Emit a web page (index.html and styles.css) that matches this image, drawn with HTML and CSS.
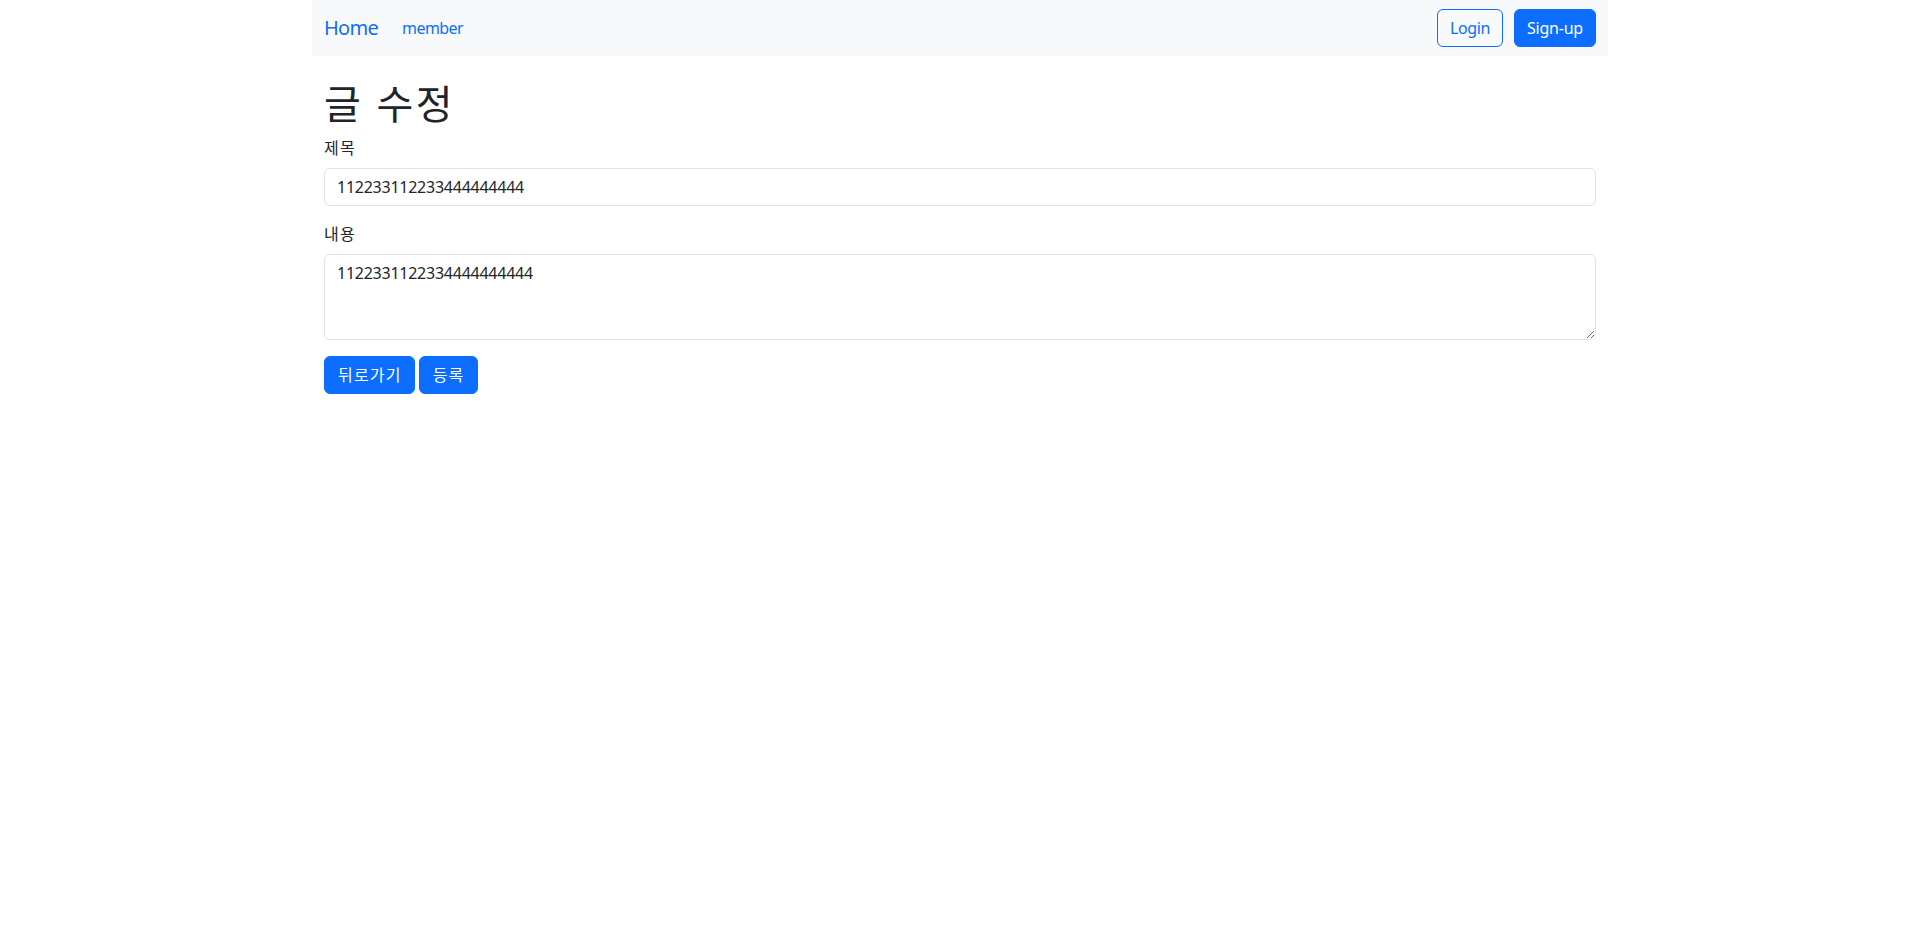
FILE: index.html
```html
<!DOCTYPE html>
<html lang="ko">
<head>
<meta charset="utf-8">
<title>글 수정</title>
<link rel="stylesheet" href="styles.css">
</head>
<body>
<div class="container">
  <nav class="navbar">
    <div class="nav-inner">
      <div class="nav-left">
        <a class="brand" href="#">Home</a>
        <ul class="nav-list">
          <li><a class="nav-link" href="#">member</a></li>
        </ul>
      </div>
      <div class="nav-right">
        <button class="btn btn-outline" type="button">Login</button>
        <button class="btn btn-primary btn-sign" type="button">Sign-up</button>
      </div>
    </div>
  </nav>
  <main class="content">
    <h1 class="title">글 수정</h1>
    <form class="form">
      <div class="field">
        <label class="label ko" for="title">제목</label>
        <input class="control" id="title" type="text" value="112233112233444444444">
      </div>
      <div class="field">
        <label class="label ko" for="body">내용</label>
        <textarea class="control area" id="body" rows="3">1122331122334444444444</textarea>
      </div>
      <div class="actions">
        <button class="btn btn-primary ko" type="button">뒤로가기</button>
        <button class="btn btn-primary ko" type="button">등록</button>
      </div>
    </form>
  </main>
</div>
</body>
</html>
```

FILE: styles.css
```css
* { box-sizing: border-box; }

html, body {
  margin: 0;
  padding: 0;
  background: #fff;
}

body {
  font-family: "Segoe UI", "Noto Sans", "Noto Sans CJK KR", sans-serif;
  font-size: 16px;
  line-height: 1.5;
  color: #212529;
}

.container {
  max-width: 1320px;
  margin: 0 auto;
  padding: 0 12px;
}

.navbar {
  background: #f8f9fa;
  padding: 8px 0;
}

.nav-inner {
  display: flex;
  align-items: center;
  justify-content: space-between;
  padding: 0 12px;
}

.nav-left {
  display: flex;
  align-items: center;
}

.brand {
  font-size: 20px;
  line-height: 30px;
  padding: 5px 0;
  margin-right: 16px;
  color: #0d6efd;
  text-decoration: none;
  letter-spacing: -0.7px;
}

.nav-list {
  list-style: none;
  margin: 0;
  padding: 0;
  display: flex;
}

.nav-link {
  display: block;
  padding: 8px;
  color: #0d6efd;
  text-decoration: none;
  letter-spacing: -0.6px;
}

.nav-right {
  display: flex;
  gap: 11px;
}

.btn {
  font-family: inherit;
  font-size: 16px;
  line-height: 24px;
  padding: 6px 12px;
  border-radius: 6px;
  border: 1px solid #0d6efd;
  cursor: pointer;
}

.btn-primary {
  background: #0d6efd;
  color: #fff;
}

.btn-sign {
  letter-spacing: -0.2px;
}

.btn-outline {
  background: transparent;
  color: #0d6efd;
  letter-spacing: -0.4px;
}

.ko {
  letter-spacing: 1.2px;
}

.btn.ko {
  padding-left: 13px;
  padding-right: 12px;
}

.content {
  padding: 0 12px;
  margin-top: 24px;
}

.title {
  font-size: 40px;
  font-weight: 400;
  line-height: 1.2;
  margin: 0 0 8px;
  letter-spacing: 2.6px;
}

.form { margin: 0; }

.field {
  margin-bottom: 16px;
}

.label {
  display: inline-block;
  margin-bottom: 8px;
}

.control {
  display: block;
  width: 100%;
  font-family: inherit;
  font-size: 16px;
  line-height: 24px;
  padding: 6px 12px;
  color: #212529;
  background: #fff;
  border: 1px solid #dee2e6;
  border-radius: 6px;
  outline: none;
  letter-spacing: -0.25px;
}

.area {
  resize: vertical;
  height: 86px;
}

.actions {
  display: flex;
  gap: 4px;
}
```
